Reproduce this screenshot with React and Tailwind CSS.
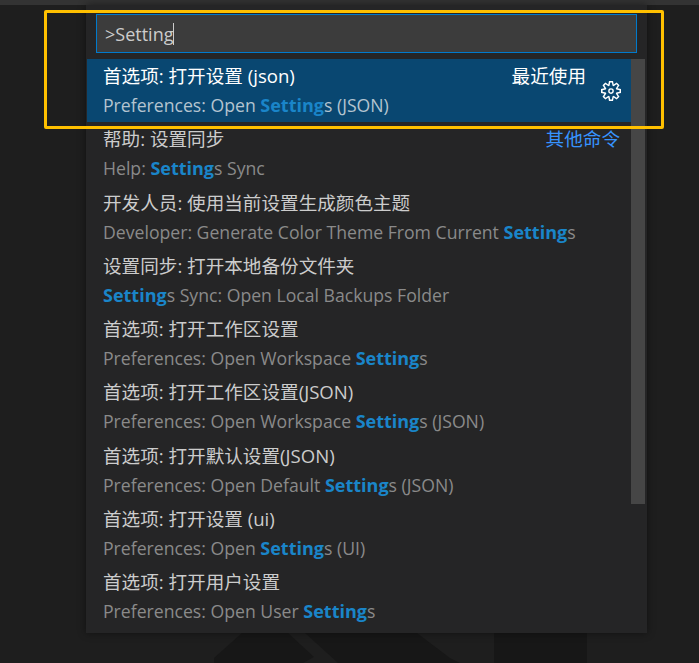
import { VscSettingsGear } from 'react-icons/vsc';

const cjk = "font-['Open_Sans','Noto_Sans_CJK_SC',sans-serif]";

const rows = [
  { zh: '首选项: 打开设置 (json)', pre: 'Preferences: Open ', post: 's (JSON)', selected: true },
  { zh: '帮助: 设置同步', pre: 'Help: ', post: 's Sync', tag: '其他命令' },
  { zh: '开发人员: 使用当前设置生成颜色主题', pre: 'Developer: Generate Color Theme From Current ', post: 's' },
  { zh: '设置同步: 打开本地备份文件夹', pre: '', post: 's Sync: Open Local Backups Folder' },
  { zh: '首选项: 打开工作区设置', pre: 'Preferences: Open Workspace ', post: 's' },
  { zh: '首选项: 打开工作区设置(JSON)', pre: 'Preferences: Open Workspace ', post: 's (JSON)' },
  { zh: '首选项: 打开默认设置(JSON)', pre: 'Preferences: Open Default ', post: 's (JSON)' },
  { zh: '首选项: 打开设置 (ui)', pre: 'Preferences: Open ', post: 's (UI)' },
  { zh: '首选项: 打开用户设置', pre: 'Preferences: Open User ', post: 's' },
];

function Row({ row }) {
  return (
    <div className={`flex h-[63.25px] shrink-0 pl-4 ${row.selected ? 'bg-[#094771] pr-[10px]' : 'pr-[11px]'}`}>
      <div className="flex-1 min-w-0">
        <div className={`flex h-[34px] items-center justify-between text-[18.6px] ${row.selected ? 'text-white' : 'text-[#cccccc]'}`}>
          <span>{row.zh}</span>
          {row.selected && <span className="mr-[15px]">最近使用</span>}
          {row.tag && <span className="text-[#3794ff]">{row.tag}</span>}
        </div>
        <div className={`h-[24px] leading-[24px] text-[17.65px] ${row.selected ? 'text-[#b4c4d0]' : 'text-[#8a8a8a]'}`}>
          {row.pre}
          <span className="text-[18px] font-bold text-[#1a85c9]">Setting</span>
          {row.post}
        </div>
      </div>
      {row.selected && (
        <div className="flex w-[20px] items-center">
          <VscSettingsGear size={20} className="text-white" />
        </div>
      )}
    </div>
  );
}

export default function App() {
  return (
    <div className={`relative h-[663px] w-[699px] overflow-hidden bg-[#1e1e1e] ${cjk}`}>
      {/* 上边的标题栏 */}
      <div className="h-[5px] bg-[#333333]" />

      {/* 背景水印 */}
      <svg className="absolute left-0 top-0" width="699" height="663" viewBox="0 0 699 663">
        <path d="M242 633 L214 658 V663 H303 L314 657 L288 633 Z" fill="#171717" />
        <path d="M305 633 L338 663 H460 L450 658 L417 633 Z" fill="#171717" />
        <path d="M494 633 H587 V663 H494 Z" fill="#171717" />
      </svg>

      {/* 命令面板 */}
      <div className="relative ml-[86px] flex h-[628px] w-[561px] flex-col bg-[#252526] shadow-[0_0_8px_rgba(0,0,0,0.45)]">
        <div className="px-[10px] pt-[9px]">
          <div className="flex h-[39px] items-center border border-[#007acc] bg-[#3c3c3c] px-[8px] pt-[1px] text-[18px] text-[#cccccc]">
            &gt;Setting
            <span className="h-[22px] w-px bg-[#cccccc]" />
          </div>
        </div>
        <div className="relative mt-[6px] flex flex-col pl-px pr-[16px]">
          {rows.map((row) => (
            <Row key={row.zh} row={row} />
          ))}
          <div className="absolute right-[2px] top-0 h-[445px] w-[14px] bg-[#79797966]" />
        </div>
      </div>

      {/* 黄色标注框 */}
      <div className="absolute left-[44px] top-[10px] h-[119px] w-[620px] rounded-[2px] border-[3px] border-[#ffc000]" />
    </div>
  );
}
